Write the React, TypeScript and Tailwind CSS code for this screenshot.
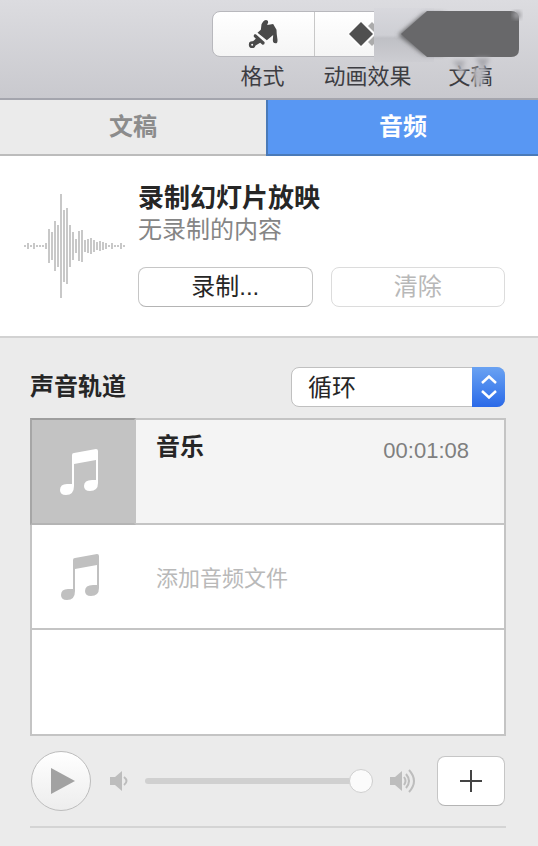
import * as React from "react";
import clsx from "clsx";

// half height of every bar, in px
const wave = [
  1, 3, 1, 3, 1, 1, 1, 3, 17, 14, 25, 21, 52, 36, 38, 21, 14, 7, 15, 16, 6, 7, 8,
  6, 4, 5, 4, 3, 1, 3, 1, 1, 3, 1,
];

function Waveform() {
  return (
    <svg className="h-[104px] w-[102px] shrink-0" viewBox="0 0 102 104">
      {wave.map((h, i) => (
        <rect key={i} x={i * 3} y={52 - h} width="2" height={h * 2} fill="#c8c8c8" />
      ))}
    </svg>
  );
}

function BrushIcon() {
  return (
    <svg className="h-[30px] w-[31px]" viewBox="144 58 92 90" fill="#4a4a4a">
      <circle cx="156" cy="135" r="6.5" fill="none" stroke="#4a4a4a" strokeWidth="7" />
      <path d="M156 127 L167 117 L161 111 Q159 103 167 104 L193 127 Q195 136 187 135 L180 129 L165 138 Z" />
      <path d="M172 99 L182 90 L184 74 Q190 61 198 61 Q205 62 204 68 L201 76 L219 73 L229 90 Q229 103 232 120 Q233 131 226 131 Q218 131 218 121 L219 106 L200 122 Z" />
    </svg>
  );
}

function DiamondsIcon() {
  return (
    <svg className="h-[26px] w-[34px]" viewBox="0 0 34 26">
      <path d="M24 1 L36 13 L24 25 L12 13 Z" fill="#ababab" />
      <path d="M13 -2 L28 13 L13 28 L-2 13 Z" fill="#fcfcfc" />
      <path d="M13 1 L25 13 L13 25 L1 13 Z" fill="#4f4f4f" />
    </svg>
  );
}

function NoteIcon() {
  return (
    <svg className="h-[46px] w-10" viewBox="0 0 40 46" fill="currentColor">
      <path d="M13 6 Q13 4 15 4 L37 0 Q39 0 39 2 L39 34 Q39 42 31 42 Q25 42 25 37 Q25 31 33 31 L37 31 L37 11 L15 15 L15 37 Q15 46 7 46 Q1 46 1 41 Q1 35 8 35 L13 35 Z" />
    </svg>
  );
}

function SpeakerIcon({ loud }: { loud?: boolean }) {
  return (
    <svg
      className={clsx("h-6 shrink-0", loud ? "w-7" : "w-5")}
      viewBox={loud ? "0 0 28 24" : "0 0 20 24"}
      fill="none"
      stroke="#bdbdbd"
      strokeWidth="2"
    >
      <path d="M1 8 H6 L13 2 V22 L6 16 H1 Z" fill="#bdbdbd" stroke="none" />
      {loud ? (
        <>
          <path d="M15 8 Q18 12 15 16" />
          <path d="M17 5 Q23 12 17 19" />
          <path d="M20 1 Q30 12 20 23" />
        </>
      ) : (
        <path d="M15 8 Q20 12 15 16" />
      )}
    </svg>
  );
}

// smeared patch that covers the right part of the toolbar
function Smudge() {
  return (
    <svg
      className="pointer-events-none absolute top-0 right-0 h-[84px] w-[149px]"
      viewBox="0 0 149 84"
    >
      <defs>
        <linearGradient id="patch" x1="0" y1="0" x2="0" y2="1">
          <stop offset="0" stopColor="#d8d8dd" />
          <stop offset="0.5" stopColor="#cecfd4" />
          <stop offset="0.56" stopColor="#bfc0c5" />
          <stop offset="1" stopColor="#cdcdd2" />
        </linearGradient>
        <filter id="soft" x="-20%" y="-20%" width="140%" height="140%">
          <feGaussianBlur stdDeviation="2" />
        </filter>
      </defs>
      <rect x="0" y="0" width="60" height="54" fill="url(#patch)" />
      <path d="M24 27 L50 5 H70 V47 H50 Z" fill="#68686a" filter="url(#soft)" />
      <path d="M27 26 L53 3 H137 Q145 3 145 11 V41 Q145 49 137 49 H53 Z" fill="#68686a" />
      <circle cx="143" cy="7" r="4" fill="#9c9ca0" filter="url(#soft)" />
      <g filter="url(#soft)">
        <path d="M78 53 H92 L86 61 Z M101 50 H116 L109 62 Z" fill="#a9a9af" />
        <path d="M82 60 H92 L88 68 Z M98 60 H112 L108 78 H101 Z" fill="#babac0" />
      </g>
    </svg>
  );
}

const button =
  "rounded-lg border border-[#c6c6c6] border-b-[#b4b4b4] bg-white text-2xl leading-8";

export default function App() {
  const [tab, setTab] = React.useState("audio");
  const [volume, setVolume] = React.useState(100);

  return (
    <div className="min-h-screen bg-[#ebebeb] font-['Liberation_Sans','Noto_Sans_CJK_SC',sans-serif] text-[#262626]">
      {/* toolbar */}
      <header className="flex justify-end border-b-2 border-[#a4a5ad] bg-linear-to-b from-[#dcdce0] to-[#c9c9ce] pt-2 pr-[15px] pb-[5px]">
        <div className="relative w-[311px] pt-[3px] pr-1">
          <div className="grid h-[46px] grid-cols-3 overflow-hidden rounded-lg border border-[#b8b8bd] bg-linear-to-b from-white to-[#f5f5f5]">
            <button aria-label="格式" className="flex items-center justify-center border-r border-[#c8c8c8]">
              <BrushIcon />
            </button>
            <button aria-label="动画效果" className="flex items-center justify-center">
              <DiamondsIcon />
            </button>
            <button aria-label="文稿" className="bg-[#68686a]" />
          </div>
          <div className="grid grid-cols-[100fr_108fr_96fr] pt-1 text-center text-[22px] leading-8 text-[#3d3d42]">
            <span>格式</span>
            <span>动画效果</span>
            <span>文稿</span>
          </div>
          <Smudge />
        </div>
      </header>

      {/* tabs */}
      <nav className="grid h-14 grid-cols-[266fr_272fr] text-2xl font-bold">
        <button
          onClick={() => setTab("doc")}
          className={clsx(
            "border-b-2",
            tab === "doc"
              ? "border-[#4a7ab8] bg-[#5897f3] text-white"
              : "border-[#bcbcbc] text-[#8c8c8c]"
          )}
        >
          文稿
        </button>
        <button
          onClick={() => setTab("audio")}
          className={clsx(
            "border-b-2",
            tab === "audio"
              ? "border-l-2 border-[#4a7ab8] bg-[#5897f3] text-white"
              : "border-[#bcbcbc] text-[#8c8c8c]"
          )}
        >
          音频
        </button>
      </nav>

      {/* record */}
      <section className="flex items-start gap-3 border-b-2 border-[#d2d2d2] bg-white pt-[26px] pr-[33px] pb-[29px] pl-6">
        <div className="pt-3">
          <Waveform />
        </div>
        <div className="flex-1">
          <h2 className="text-[26px] leading-8 font-bold">录制幻灯片放映</h2>
          <p className="text-2xl leading-8 text-[#858585]">无录制的内容</p>
          <div className="grid grid-cols-2 gap-[18px] pt-[21px]">
            <button className={clsx(button, "h-10")}>录制...</button>
            <button disabled className="h-10 rounded-lg border border-[#dcdcdc] bg-white text-2xl leading-8 text-[#b8b8b8]">
              清除
            </button>
          </div>
        </div>
      </section>

      {/* sound track */}
      <section className="pt-[29px] pr-8 pl-[30px]">
        <div className="flex items-center justify-between">
          <label htmlFor="loop" className="text-2xl font-bold">
            声音轨道
          </label>
          <div className="relative mr-px w-[214px]">
            <select
              id="loop"
              className="h-10 w-full appearance-none rounded-lg border border-[#c0c0c0] bg-white pt-0.5 pl-4 text-2xl"
            >
              <option>循环</option>
              <option>播放一次</option>
              <option>关闭</option>
            </select>
            <span className="pointer-events-none absolute inset-y-0 right-0 flex w-[33px] items-center justify-center rounded-r-lg bg-linear-to-b from-[#6aa2f2] to-[#2a69e8]">
              <svg className="h-6 w-4" viewBox="0 0 16 24" fill="none" stroke="white" strokeWidth="2.5">
                <path d="M1 8 L8 1.5 L15 8 M1 16 L8 22.5 L15 16" />
              </svg>
            </span>
          </div>
        </div>

        <ul className="mt-[11px] border-2 border-[#c4c4c4] bg-white">
          <li className="flex h-[105px] border-b-2 border-[#c4c4c4] bg-[#f4f4f4]">
            <div className="-mt-0.5 -mb-0.5 -ml-0.5 flex w-[106px] items-center justify-center border-2 border-t-[#9e9e9e] border-r-[#c3c3c3] border-b-[#b4b4b4] border-l-[#a6a6a6] bg-[#c3c3c3] pr-2 text-white">
              <NoteIcon />
            </div>
            <div className="flex flex-1 items-start justify-between pt-[11px] pr-[35px] pl-5">
              <span className="text-2xl leading-8 font-bold">音乐</span>
              <time className="pt-1 text-[22px] leading-8 text-[#7f7f7f]">00:01:08</time>
            </div>
          </li>
          <li className="flex h-[105px] items-center border-b-2 border-[#c4c4c4]">
            <div className="flex w-[104px] justify-center pr-2 text-[#c0c0c0]">
              <NoteIcon />
            </div>
            <span className="pt-1 pl-5 text-[22px] text-[#b9b9b9]">添加音频文件</span>
          </li>
          <li className="h-[104px]" />
        </ul>

        {/* player */}
        <div className="flex items-center border-b-2 border-[#d4d4d4] px-px py-[15px]">
          <button
            aria-label="播放"
            className="flex size-[60px] items-center justify-center rounded-full border border-[#bdbdbd] bg-linear-to-b from-white to-[#ededed] pl-1"
          >
            <svg className="h-[26px] w-6" viewBox="0 0 24 26">
              <path d="M0 0 L24 13 L0 26 Z" fill="#a2a2a2" />
            </svg>
          </button>
          <div className="flex flex-1 items-center pr-5 pl-[18px]">
            <SpeakerIcon />
            <input
              type="range"
              aria-label="音量"
              min="0"
              max="100"
              value={volume}
              onChange={(e) => setVolume(Number(e.target.value))}
              className="mx-4 h-6 min-w-0 flex-1 appearance-none bg-transparent [&::-webkit-slider-runnable-track]:h-1.5 [&::-webkit-slider-runnable-track]:rounded-full [&::-webkit-slider-runnable-track]:bg-[#d0d0d0] [&::-webkit-slider-thumb]:-mt-[9px] [&::-webkit-slider-thumb]:size-6 [&::-webkit-slider-thumb]:appearance-none [&::-webkit-slider-thumb]:rounded-full [&::-webkit-slider-thumb]:border [&::-webkit-slider-thumb]:border-[#cfcfcf] [&::-webkit-slider-thumb]:bg-[#fbfbfb]"
            />
            <SpeakerIcon loud />
          </div>
          <button aria-label="添加" className={clsx(button, "flex h-[50px] w-[68px] items-center justify-center")}>
            <svg className="size-[22px]" viewBox="0 0 22 22" stroke="#444" strokeWidth="2">
              <path d="M11 0 V22 M0 11 H22" />
            </svg>
          </button>
        </div>
      </section>
    </div>
  );
}
